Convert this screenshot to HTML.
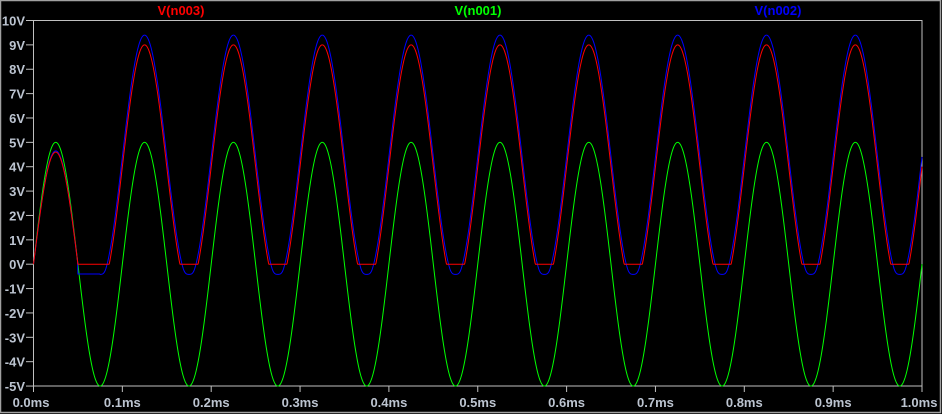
<!DOCTYPE html>
<html><head><meta charset="utf-8"><style>
html,body{margin:0;padding:0;background:#000;}
body{width:942px;height:414px;overflow:hidden;position:relative;}
</style></head><body>
<svg id="s" width="942" height="414" style="position:absolute;left:0;top:0" xmlns="http://www.w3.org/2000/svg">
<rect x="0.5" y="0.5" width="940" height="412" fill="none" stroke="#a0a0a0" stroke-width="1.5"/>
<rect x="33.5" y="20.5" width="888.5" height="365.5" fill="none" stroke="#c0c0c0" stroke-width="1"/>
<g id="ticks" stroke="#c0c0c0" stroke-width="1"></g>
<path id="g" fill="none" stroke="#00ff00" stroke-width="1"/>
<path id="b" fill="none" stroke="#0000ff" stroke-width="1"/>
<path id="r" fill="none" stroke="#ff0000" stroke-width="1"/>
<text x="181" y="15" fill="#ff0000" font-family="Liberation Sans,Arial,sans-serif" font-weight="bold" font-size="13" text-anchor="middle">V(n003)</text>
<text x="478" y="15" fill="#00ff00" font-family="Liberation Sans,Arial,sans-serif" font-weight="bold" font-size="13" text-anchor="middle">V(n001)</text>
<text x="778" y="15" fill="#0000ff" font-family="Liberation Sans,Arial,sans-serif" font-weight="bold" font-size="13" text-anchor="middle">V(n002)</text>
<g id="lab" fill="#bcc4d0" font-family="Liberation Sans,Arial,sans-serif" font-weight="bold" font-size="13"></g>
</svg>
<script>
var X0=33.5,XS=888.5,Y0=264.2,YS=24.37;
function px(t){return X0+t*XS;} function py(v){return Y0-v*YS;}
var ns="http://www.w3.org/2000/svg";
var tk=document.getElementById('ticks'),lb=document.getElementById('lab');
for(var v=-5;v<=10;v++){var y=py(v);
 var l=document.createElementNS(ns,'line');l.setAttribute('x1',26);l.setAttribute('x2',33.5);l.setAttribute('y1',y);l.setAttribute('y2',y);tk.appendChild(l);
 var t=document.createElementNS(ns,'text');t.setAttribute('x',25);t.setAttribute('y',y+5);t.setAttribute('text-anchor','end');t.textContent=v+'V';lb.appendChild(t);}
for(var i=0;i<=10;i++){var x=px(i/10);
 var l=document.createElementNS(ns,'line');l.setAttribute('x1',x);l.setAttribute('x2',x);l.setAttribute('y1',386);l.setAttribute('y2',392);tk.appendChild(l);
 var t=document.createElementNS(ns,'text');t.setAttribute('x',i==0?31:(i==10?919:x));t.setAttribute('y',407);t.setAttribute('text-anchor','middle');t.textContent=(i/10).toFixed(1)+'ms';lb.appendChild(t);}
function smax(a,m){var k=0.12;return m+k*Math.log(1+Math.exp((a-m)/k));}
var gd='',bd='',rd='';
for(var k=0;k<=2000;k++){var t=k/2000;var g=5*Math.sin(2*Math.PI*10*t);var b,r;
 if(t<0.05){b=smax(0.93*g,-0.4);}
 else if(t<0.075){b=-0.4;}
 else{b=smax(g+4.4,-0.45);}
 if(t<0.05){r=0.92*g;if(r<0)r=0;} else {r=b-0.4;if(r<0)r=0;}
 var c=k?'L':'M';var x=px(t).toFixed(2);
 gd+=c+x+' '+py(g).toFixed(2);bd+=c+x+' '+py(b).toFixed(2);rd+=c+x+' '+py(r).toFixed(2);}
document.getElementById('g').setAttribute('d',gd);
document.getElementById('b').setAttribute('d',bd);
document.getElementById('r').setAttribute('d',rd);
</script>
</body></html>
